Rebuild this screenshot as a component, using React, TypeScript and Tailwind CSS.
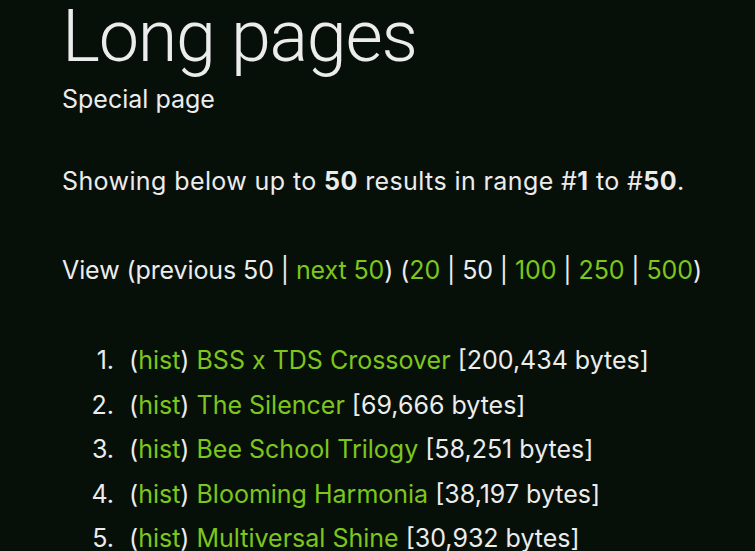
export default function App() {
  const green = "text-[#7dc61c]";
  const items = [
    { n: "1.", t: "BSS x TDS Crossover", b: "[200,434 bytes]" },
    { n: "2.", t: "The Silencer", b: "[69,666 bytes]" },
    { n: "3.", t: "Bee School Trilogy", b: "[58,251 bytes]" },
    { n: "4.", t: "Blooming Harmonia", b: "[38,197 bytes]" },
    { n: "5.", t: "Multiversal Shine", b: "[30,932 bytes]" },
  ];
  return (
    <div
      className="h-[551px] w-[755px] overflow-hidden bg-[#061009] pl-[62px] text-[#ececec]"
      style={{ fontFamily: "Inter, 'Noto Sans', sans-serif" }}
    >
      <h1
        className="pt-[1px] text-[72px] font-light leading-[72px] tracking-[-1.3px]"
        style={{ fontFamily: "Roboto, 'Noto Sans', sans-serif" }}
      >
        Long pages
      </h1>
      <div className="mt-[4px] text-[25px] leading-[44.5px]">Special page</div>
      <p className="mt-[37px] text-[25px] leading-[44.5px] tracking-[0.4px]">
        Showing below up to <b className="font-bold">50</b> results in range #<b className="font-bold">1</b> to #<b className="font-bold">50</b>.
      </p>
      <p className="mt-[45px] text-[25px] leading-[44.5px] tracking-[-0.1px]">
        View (previous 50 | <span className={green}>next 50</span>) (<span className={green}>20</span> | 50 | <span className={green}>100</span> | <span className={green}>250</span> | <span className={green}>500</span>)
      </p>
      <ol className="mt-[45.5px] text-[25px] leading-[44.5px]">
        {items.map((it) => (
          <li key={it.n} className="flex whitespace-nowrap">
            <span className="w-[67px] pr-[15px] text-right">{it.n}</span>
            <span>
              (<span className={green}>hist</span>) <span className={green}>{it.t}</span> {it.b}
            </span>
          </li>
        ))}
      </ol>
    </div>
  );
}
